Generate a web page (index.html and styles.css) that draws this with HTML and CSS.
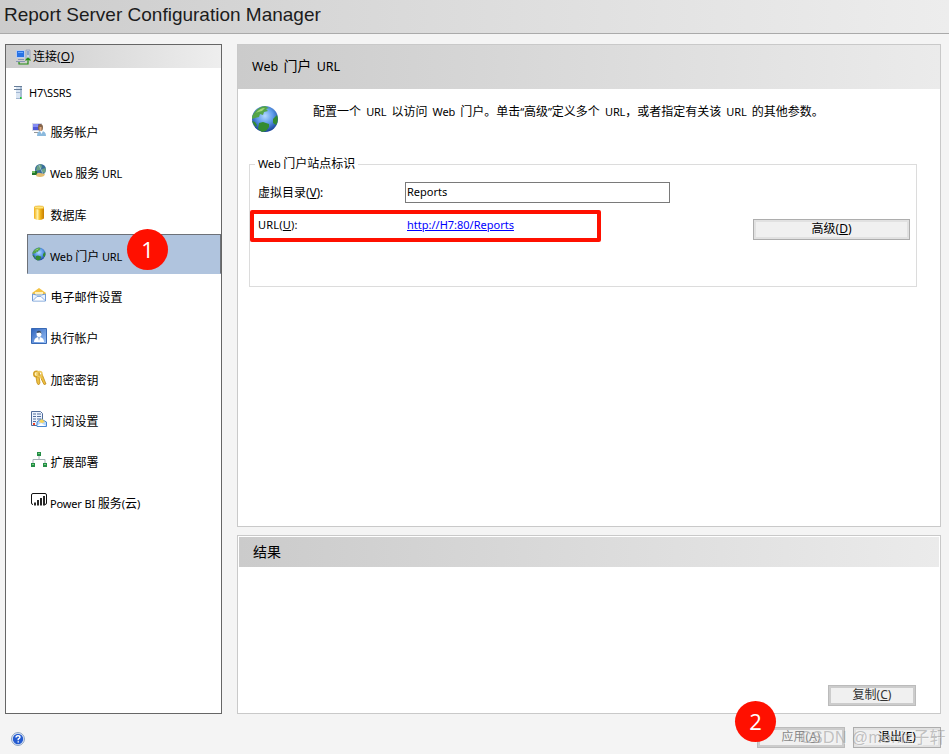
FILE: index.html
```html
<!DOCTYPE html>
<html lang="zh-CN">
<head>
    <meta charset="UTF-8">
    <meta name="viewport" content="width=device-width, initial-scale=1.0">
    <title>Report Server Configuration Manager</title>
    <link rel="stylesheet" href="styles.css">
</head>
<body>

<svg class="defs" width="0" height="0">
    <defs>
        <radialGradient id="sea" cx="50%" cy="38%" r="62%">
            <stop offset="0" stop-color="#b4d9ff"/>
            <stop offset=".5" stop-color="#5e9bea"/>
            <stop offset="1" stop-color="#153f96"/>
        </radialGradient>
        <linearGradient id="gold">
            <stop offset="0" stop-color="#f0ad13"/>
            <stop offset=".35" stop-color="#fff0a5"/>
            <stop offset=".6" stop-color="#f4b91d"/>
            <stop offset="1" stop-color="#c77d00"/>
        </linearGradient>
        <linearGradient id="blue" x2="1" y2="1">
            <stop offset="0" stop-color="#2c62bd"/>
            <stop offset="1" stop-color="#9fc5f8"/>
        </linearGradient>
        <symbol id="globe" viewBox="0 0 28 28">
            <circle cx="14" cy="14" r="13" fill="url(#sea)"/>
            <path d="M3 8Q7 2 14 1L18 3 15 4 17 6 13 7 12 10 9 9 8 12 4 13 1 14Q1 10 3 8Z" fill="#55a548"/>
            <path d="M1 16L4 17 6 20 5 22Q2 19 1 16ZM8 18L12 17 18 19 18 22 15 26 11 27 7 24Z" fill="#348b31"/>
            <path d="M26 10Q28 15 25 20L22 18 22 14Z" fill="#348b31"/>
            <path d="M5 8Q9 3 14 3L11 6 7 7Z" fill="#a4d77b"/>
        </symbol>
    </defs>
</svg>

<header class="title-bar">
    <h1>Report Server Configuration Manager</h1>
</header>

<main>
    <aside class="sidebar">
        <div class="connect">
            <svg class="icon" viewBox="0 0 16 16">
                <path d="M1 1h9v8H1z" fill="#b9cdf0"/><path d="M2 2h7v6H2z" fill="#2872e5"/><path d="M3 3h5v1H3z" fill="#69a7ff"/>
                <path d="M3 10h6v1H3zM1 12h9v1H1z" fill="#8795b5"/><path d="M11 1h4v9h-4z" fill="#c6d2e4" stroke="#8997b0" stroke-width=".7"/>
                <path d="M12 3h2M12 5h2" stroke="#527dba"/><path d="M4 13v2h9V9M10.5 11.5L13 9l2.5 2.5" fill="none" stroke="#258c12" stroke-width="1.2"/>
            </svg>
            <span><span class="zh">连接</span>(<u>O</u>)</span>
        </div>
        <div class="server">
            <svg class="icon" viewBox="0 0 16 16">
                <path d="M3 1h6v13H3z" fill="#d9e5f3"/><path d="M7 1h2v13H7z" fill="#a9bdd4"/>
                <path d="M1 1.5h8M1 4.5h8" stroke="#677d98"/><path d="M3 7.5h4M3 13.5h6" stroke="#a1b5d0"/><path d="M7 12h1.5v2H7z" fill="#20c735"/>
            </svg>
            <span>H7\SSRS</span>
        </div>
        <nav>
            <a>
                <svg class="icon" viewBox="0 0 16 16">
                    <path d="M1 1h10v8H1z" fill="#d6d9e5"/><path d="M2 2h8v6H2z" fill="#4f58d8"/><path d="M2 2h5v3H2z" fill="#858df3"/><path d="M3 10h5v1H3z" fill="#999"/>
                    <ellipse cx="9.5" cy="5.5" rx="2.5" ry="3.5" fill="#87664b"/><path d="M8.5 5h2v4h-2z" fill="#e0aa82"/><path d="M6 14Q6 9 10 9q5 0 5 5z" fill="#8bb9dd"/><path d="M9 9l1.5 3L12 9z" fill="#fff"/>
                </svg>
                <span class="zh">服务帐户</span>
            </a>
            <a>
                <svg class="icon" viewBox="0 0 16 16">
                    <circle cx="9.5" cy="6.5" r="5.5" fill="#386e9b"/><path d="M6 3l4-2 1 3-2 3-4 1zM11 6l4-1-1 5-3-1z" fill="#6ca284"/><path d="M8 2l4 9" stroke="#b3d3e5" stroke-width=".7"/>
                    <path d="M1 8h5v4H1z" fill="#22772b"/><path d="M1 8h3v2H1z" fill="#71bd65"/><path d="M5 13q1-4 4-3l5 1-1 2q-4 2-8 0z" fill="#e2bd72"/>
                </svg>
                <span>Web <span class="zh">服务</span> URL</span>
            </a>
            <a>
                <svg class="icon" viewBox="0 0 16 16">
                    <path d="M3 2.5v11q5 3 10 0v-11z" fill="url(#gold)"/><ellipse cx="8" cy="2.5" rx="5" ry="1.5" fill="#ffe67c" stroke="#e7a811" stroke-width=".7"/>
                </svg>
                <span class="zh">数据库</span>
            </a>
            <a class="active">
                <svg class="icon" viewBox="0 0 16 16"><use href="#globe" x="1" y="1" width="14" height="14"/></svg>
                <span>Web <span class="zh">门户</span> URL</span>
                <b class="badge badge-one">1</b>
            </a>
            <a>
                <svg class="icon" viewBox="0 0 16 16">
                    <path d="M1 6l7-5 7 5-2 3H3z" fill="#f3c343"/><path d="M4 5h8v5H4z" fill="#fff1bd"/><path d="M1.5 7l4 1h5l4-1v7h-13z" fill="#eaf3ff" stroke="#6f9ad4"/>
                    <path d="M2 13.5l4-4h4l4 4" fill="#fff" stroke="#89ade1"/>
                </svg>
                <span class="zh">电子邮件设置</span>
            </a>
            <a>
                <svg class="icon" viewBox="0 0 16 16">
                    <path d="M.5.5h15v15H.5z" fill="url(#blue)" stroke="#3869b5"/><ellipse cx="8" cy="6" rx="2.5" ry="3" fill="#fff"/><path d="M5.5 5q0-3 4-2l1.5 3-2-1.5z" fill="#344760"/><path d="M3 14q0-4 4-5h2q4 1 4 5z" fill="#fff"/><path d="M7 9h2l-1 4z" fill="#8caad3"/>
                </svg>
                <span class="zh">执行帐户</span>
            </a>
            <a>
                <svg class="icon" viewBox="0 0 16 16">
                    <path d="M8 6l3-2 4 10-2 .5-3-6M5 7l3-1 1 7-1.5 2L6 13z" fill="#edc142" stroke="#c28b19" stroke-width=".8"/>
                    <circle cx="5.5" cy="4" r="2.7" fill="#fff3b8" stroke="#d3a026" stroke-width="1.6"/><circle cx="8.5" cy="4" r="2.5" fill="none" stroke="#edc85d" stroke-width="1.5"/>
                </svg>
                <span class="zh">加密密钥</span>
            </a>
            <a>
                <svg class="icon" viewBox="0 0 16 16">
                    <path d="M.5.5h9l2 2v12H.5z" fill="#edf4ff" stroke="#506c9b"/><path d="M2 3h3M6 3h4M2 5.5h3M6 5.5h4M2 8h3M6 8h4M2 10.5h3" stroke="#536f9e"/>
                    <path d="M2 12h2v2H2z" fill="#f04422"/><path d="M6 11l4-3 5.5 3v4.5H6z" fill="#b5d8ff" stroke="#4886ce"/><path d="M9 9l2-1 3 3-3 1-3-1z" fill="#f6d45c"/><path d="M6 15l4-3 5 3" fill="#fff"/>
                </svg>
                <span class="zh">订阅设置</span>
            </a>
            <a>
                <svg class="icon" viewBox="0 0 16 16">
                    <path d="M8 4v3.5M2 12V7.5h12V12" fill="none" stroke="#a5b0b6"/><path d="M6 0h4v4H6zM0 11h4v4H0zM12 11h4v4h-4z" fill="#258d46"/><path d="M7 1h2v1H7zM1 12h2v1H1zM13 12h2v1h-2z" fill="#72d17d"/>
                </svg>
                <span class="zh">扩展部署</span>
            </a>
            <a>
                <svg class="icon" viewBox="0 0 16 16">
                    <path d="M2 11.5Q.5 11.5.5 10V2Q.5.5 2 .5h12q1.5 0 1.5 1.5v8q0 1.5-1.5 1.5" fill="none" stroke="#111"/>
                    <path d="M4 9.5v3M7 7v5.5M10 5v7.5M13 3v9.5" stroke="#111" stroke-width="1.8"/>
                </svg>
                <span>Power BI <span class="zh">服务</span>(<span class="zh">云</span>)</span>
            </a>
        </nav>
    </aside>

    <div class="content">
        <section class="portal">
            <h2>Web <span class="zh">门户</span> URL</h2>
            <div class="intro">
                <svg class="globe-icon"><use href="#globe"/></svg>
                <p><span class="zh">配置一个</span> URL <span class="zh">以访问</span> Web <span class="zh">门户。单击</span>“<span class="zh">高级</span>”<span class="zh">定义多个</span> URL<span class="zh">，或者指定有关该</span> URL <span class="zh">的其他参数。</span></p>
            </div>
            <fieldset>
                <legend>Web <span class="zh">门户站点标识</span></legend>
                <div class="field">
                    <label for="directory"><span class="zh">虚拟目录</span>(<u>V</u>):</label>
                    <input id="directory" type="text" value="Reports">
                </div>
                <div class="url-row">
                    <div class="highlight">
                        <span class="url-label">URL(<u>U</u>):</span>
                        <a href="#">http://H7:80/Reports</a>
                    </div>
                    <button class="advanced"><span class="zh">高级</span>(<u>D</u>)</button>
                </div>
            </fieldset>
        </section>

        <section class="results">
            <h2><span class="zh">结果</span></h2>
            <button class="copy"><span class="zh">复制</span>(<u>C</u>)</button>
        </section>
    </div>
</main>

<footer>
    <svg class="help" viewBox="0 0 14 14">
        <circle cx="7" cy="7" r="6.4" fill="#eef5ff" stroke="#8099bb"/><circle cx="7" cy="7" r="5.2" fill="#245bd0"/>
        <path d="M5 5.5Q5 3.7 7 3.7t2 1.6Q9 6.3 7.2 7.2v1" fill="none" stroke="#fff" stroke-width="1.4"/><path d="M6.5 9.2H8v1.4H6.5z" fill="#fff"/>
    </svg>
    <div class="actions">
        <button class="apply" disabled><span class="zh">应用</span>(<u>A</u>)</button>
        <button class="exit"><span class="zh">退出</span>(<u>E</u>)</button>
        <b class="badge badge-two">2</b>
        <span class="watermark">CSDN @moniz子轩</span>
    </div>
</footer>

</body>
</html>
```
FILE: styles.css
```css
:root {
    --panel-border: #c9c9c9;
    --dark-border: #666;
    --red: #ff1000;
}

* {
    margin: 0;
    padding: 0;
    box-sizing: border-box;
}

body {
    width: 949px;
    height: 754px;
    overflow: hidden;
    background: #f4f4f4;
    color: #000;
    font-family: "Noto Sans", "Noto Sans CJK SC", sans-serif;
    font-size: 11px;
    line-height: 16px;
    letter-spacing: -0.15px;
}

.defs {
    position: absolute;
}

.zh {
    font-family: "Noto Sans CJK SC", sans-serif;
    font-size: 12px;
    letter-spacing: 0;
}

u {
    text-underline-offset: 1px;
}

.title-bar {
    height: 34px;
    padding-left: 4px;
    border-bottom: 1px solid #aaa;
    background: linear-gradient(to right, #ccc, #ededed);
}

.title-bar h1 {
    font: 19px/30px "Liberation Sans", sans-serif;
    letter-spacing: 0;
    color: #1c1c1c;
}

main {
    display: flex;
    gap: 15px;
    height: 680px;
    padding: 10px 8px 0 5px;
}

.sidebar {
    width: 217px;
    height: 670px;
    border: 1px solid var(--dark-border);
    background: #fff;
}

.icon {
    flex: none;
    width: 16px;
    height: 16px;
}

.connect {
    display: flex;
    align-items: center;
    gap: 2px;
    height: 23px;
    padding-left: 9px;
    background: linear-gradient(to right, #ccc, #eee);
    font-size: 12px;
    letter-spacing: 0.2px;
}

.server {
    display: flex;
    align-items: center;
    height: 42px;
    padding: 7px 0 0 7px;
}

nav a {
    position: relative;
    display: flex;
    align-items: flex-start;
    gap: 3px;
    height: 41.25px;
    margin-left: 21px;
    padding: 11px 0 0 3px;
    border: 1px solid transparent;
    white-space: nowrap;
}

nav a > span {
    margin-top: 2px;
}

nav a > .zh {
    padding-left: 0.5px;
}

nav .active {
    height: 40.25px;
    margin-bottom: 1px;
    background: #b0c4de;
    border-color: #6d7178;
    border-bottom-color: #b0c4de;
}

.badge {
    position: absolute;
    width: 41px;
    height: 41px;
    border-radius: 50%;
    background: var(--red);
    color: #fff;
    font: 22px/41px "Open Sans", sans-serif;
    text-align: center;
}

.badge-one {
    left: 99px;
    top: -6px;
}

.content {
    display: flex;
    flex-direction: column;
    gap: 8px;
    width: 704px;
}

.portal,
.results {
    border: 1px solid var(--panel-border);
    background: #fff;
}

.portal {
    height: 483px;
}

h2 {
    background: linear-gradient(to right, #cbcbcb, #ebebeb);
    font-weight: normal;
}

.portal h2 {
    height: 44px;
    padding-left: 14px;
    font-size: 12.5px;
    line-height: 40px;
    letter-spacing: 0;
    word-spacing: 2px;
}

.portal h2 .zh {
    font-size: 14px;
}

.intro {
    display: flex;
    gap: 34px;
    padding: 14px 0 0 13px;
}

.globe-icon {
    width: 28px;
    height: 28px;
    margin-top: 2px;
}

.intro p {
    white-space: nowrap;
    word-spacing: 2.4px;
}

fieldset {
    height: 131px;
    margin: 23px 23px 0 11px;
    border: 1px solid #dcdcdc;
}

legend {
    position: relative;
    top: -1px;
    margin-left: 5px;
    padding: 0 3px;
}

.field {
    display: flex;
    align-items: center;
    margin-top: 9px;
    padding-left: 8px;
}

.field label {
    width: 147px;
    font-size: 12px;
}

input {
    width: 265px;
    height: 21px;
    padding: 0 1px 2px;
    border: 1px solid #7a7a7a;
    font: inherit;
}

.url-row {
    display: flex;
    justify-content: space-between;
    margin-top: 7px;
    padding-right: 6px;
}

.highlight {
    display: flex;
    width: 351px;
    height: 32px;
    padding: 3px 0 0 4px;
    border: 4px solid var(--red);
    border-radius: 2px;
}

.url-label {
    width: 149px;
    letter-spacing: 0.2px;
}

.highlight a {
    color: #00f;
    letter-spacing: 0;
}

button {
    width: 88px;
    height: 21px;
    border: 1px solid #adadad;
    background: #f0f0f0;
    box-shadow: inset 0 0 0 2px #e1e1e1;
    color: #000;
    font: inherit;
    font-size: 12px;
    line-height: 16px;
    padding-bottom: 2px;
}

.advanced {
    width: 157px;
    margin-top: 9px;
}

.results {
    display: flex;
    flex-direction: column;
    height: 179px;
    padding: 1px;
}

.results h2 {
    height: 30px;
    padding-left: 14px;
    line-height: 27px;
}

.results h2 .zh {
    font-size: 14px;
}

.copy {
    margin: auto 23px 6px auto;
    border-color: #bbb;
    box-shadow: inset 0 0 0 2px #ccc;
    color: #333;
}

footer {
    display: flex;
    justify-content: space-between;
    padding: 13px 8px 0 11px;
}

.help {
    width: 14px;
    height: 14px;
    margin-top: 5px;
}

.actions {
    position: relative;
    display: flex;
    gap: 8px;
}

.apply {
    color: #888;
    border-color: #bbb;
    box-shadow: inset 0 0 0 2px #ccc;
}

.badge-two {
    left: -22px;
    top: -26px;
}

.watermark {
    position: absolute;
    right: -5px;
    top: 1px;
    color: rgba(150, 150, 150, 0.55);
    font: 16px/20px "Liberation Sans", "Noto Sans CJK SC", sans-serif;
    letter-spacing: 0.4px;
    text-shadow: 1px 1px 0 rgba(255, 255, 255, 0.4);
    white-space: nowrap;
}
```
